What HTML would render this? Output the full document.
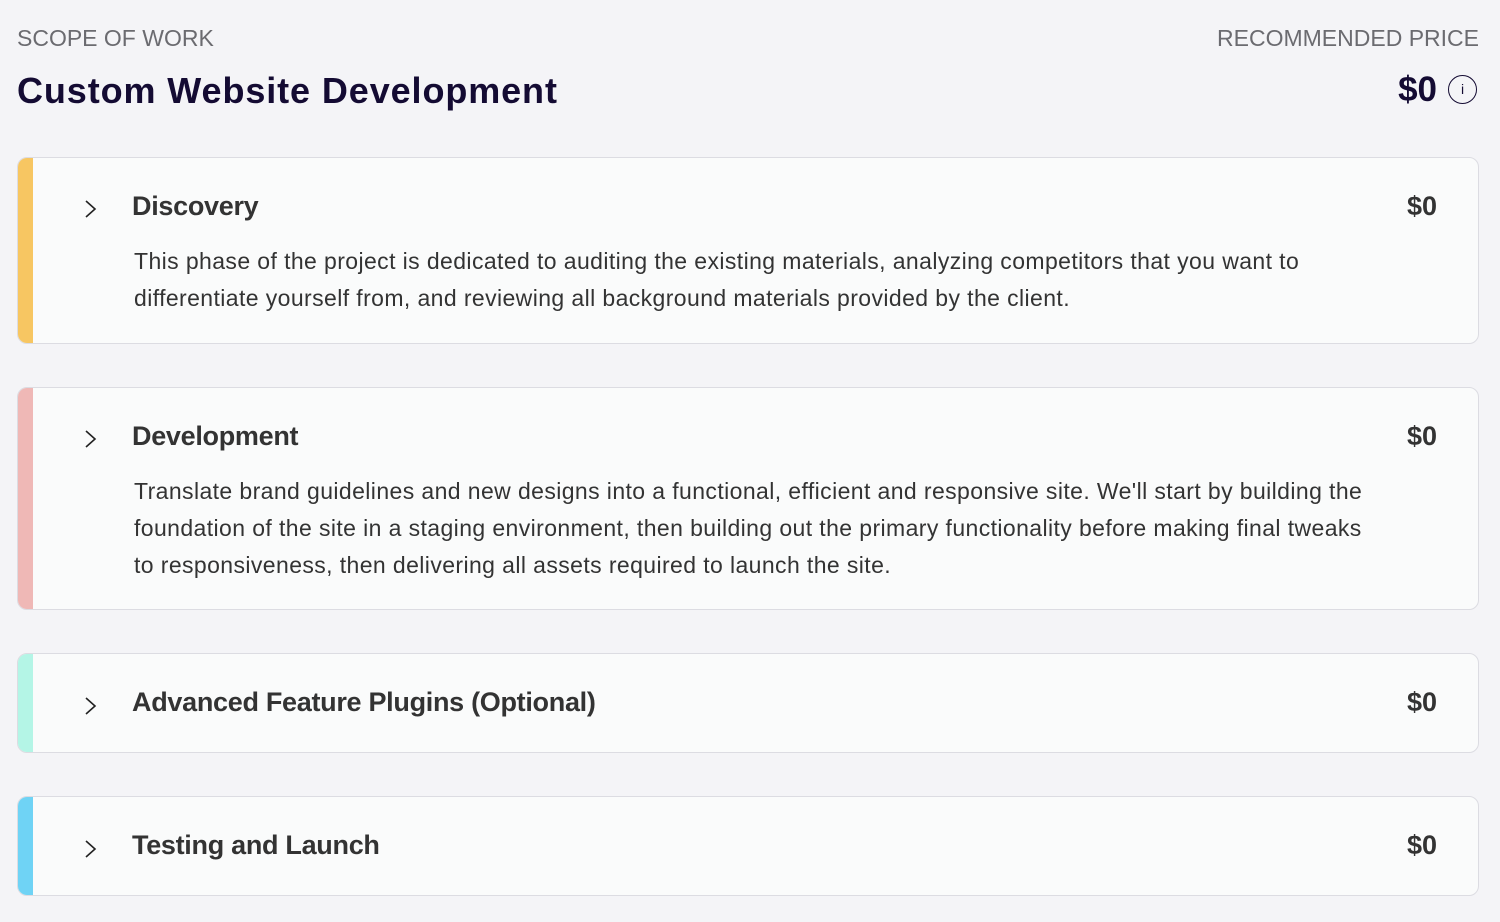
<!DOCTYPE html>
<html><head><style>
body{margin:0;background:#f4f4f7;font-family:"Liberation Sans",sans-serif;width:1500px;height:922px;overflow:hidden;position:relative}
.lab{position:absolute;top:25px;font-size:23px;color:#6b6b70;letter-spacing:0}
.h1{position:absolute;left:17px;top:70px;font-size:36px;font-weight:bold;color:#140b33;letter-spacing:0.9px}
.tp{position:absolute;right:63px;top:70px;font-size:35px;font-weight:bold;color:#140b33}
.info{position:absolute;left:1448px;top:75px;width:29px;height:29px;border:1.5px solid #140b33;border-radius:50%;box-sizing:border-box;text-align:center;font-size:14px;line-height:26px;color:#140b33}
.card{position:absolute;left:17px;width:1462px;background:#fafbfb;border:1.5px solid #dcdce2;border-radius:10px;box-sizing:border-box;overflow:hidden}
.bar{position:absolute;left:0;top:0;bottom:0;width:15px}
.chev{position:absolute;left:66px;width:14px;height:20px}
.t{position:absolute;left:114px;font-size:27px;font-weight:bold;color:#333;letter-spacing:-0.3px}
.p{position:absolute;right:41px;font-size:27px;font-weight:bold;color:#333}
.d{position:absolute;left:116px;white-space:nowrap;font-size:23px;line-height:37px;color:#333;letter-spacing:0.4px}
</style></head><body>
<div class="lab" style="left:17px">SCOPE OF WORK</div>
<div class="lab" style="right:21px">RECOMMENDED PRICE</div>
<div class="h1">Custom Website Development</div>
<div class="tp">$0</div>
<div class="info">i</div>

<div class="card" style="top:157px;height:187px"><div class="bar" style="background:#f7c662"></div>
<svg class="chev" style="top:41px" viewBox="0 0 14 20"><path d="M2 2l9 8-9 8" fill="none" stroke="#222" stroke-width="1.6"/></svg>
<div class="t" style="top:33px">Discovery</div><div class="p" style="top:33px">$0</div>
<div class="d" style="top:85px">This phase of the project is dedicated to auditing the existing materials, analyzing competitors that you want to<br>differentiate yourself from, and reviewing all background materials provided by the client.</div></div>

<div class="card" style="top:387px;height:223px"><div class="bar" style="background:#efb8b6"></div>
<svg class="chev" style="top:41px" viewBox="0 0 14 20"><path d="M2 2l9 8-9 8" fill="none" stroke="#222" stroke-width="1.6"/></svg>
<div class="t" style="top:33px">Development</div><div class="p" style="top:33px">$0</div>
<div class="d" style="top:85px">Translate brand guidelines and new designs into a functional, efficient and responsive site. We'll start by building the<br>foundation of the site in a staging environment, then building out the primary functionality before making final tweaks<br>to responsiveness, then delivering all assets required to launch the site.</div></div>

<div class="card" style="top:653px;height:100px"><div class="bar" style="background:#b4f5e6"></div>
<svg class="chev" style="top:42px" viewBox="0 0 14 20"><path d="M2 2l9 8-9 8" fill="none" stroke="#222" stroke-width="1.6"/></svg>
<div class="t" style="top:33px">Advanced Feature Plugins (Optional)</div><div class="p" style="top:33px">$0</div></div>

<div class="card" style="top:796px;height:100px"><div class="bar" style="background:#6fd3f5"></div>
<svg class="chev" style="top:42px" viewBox="0 0 14 20"><path d="M2 2l9 8-9 8" fill="none" stroke="#222" stroke-width="1.6"/></svg>
<div class="t" style="top:33px">Testing and Launch</div><div class="p" style="top:33px">$0</div></div>
</body></html>
